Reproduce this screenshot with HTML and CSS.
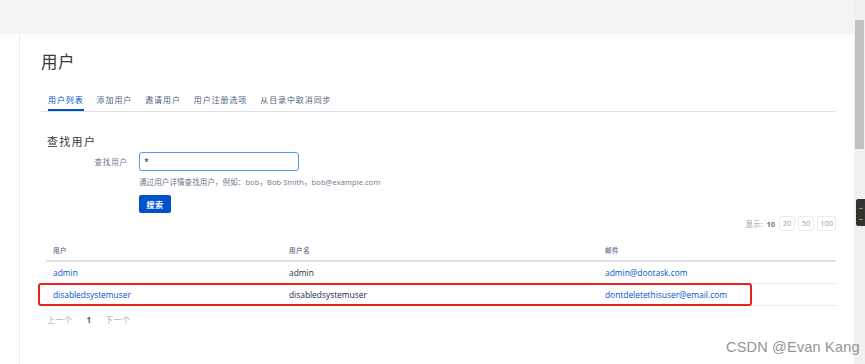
FILE: index.html
```html
<!DOCTYPE html>
<html lang="zh">
<head>
<meta charset="utf-8">
<title>用户</title>
<link rel="stylesheet" href="styles.css">
</head>
<body>
<div class="page">
  <div class="main">
    <div class="topband"></div>
    <div class="body-row">
      <div class="gutter"></div>
      <div class="content">
        <h1 class="title">用户</h1>
        <nav class="tabs">
          <span class="tab active">用户列表</span>
          <span class="tab">添加用户</span>
          <span class="tab">邀请用户</span>
          <span class="tab">用户注册选项</span>
          <span class="tab">从目录中取消同步</span>
        </nav>
        <div class="inner">
          <h2 class="section-title">查找用户</h2>
          <div class="form-row">
            <label class="label">查找用户</label>
            <div class="field">
              <div class="input">*</div>
              <div class="hint">通过用户详情查找用户，例如：bob，Bob Smith，bob@example.com</div>
              <button class="btn">搜索</button>
            </div>
          </div>
          <div class="pagesize">
            <span class="ps-label">显示:</span>
            <span class="ps-current">10</span>
            <span class="ps-box">20</span>
            <span class="ps-box">50</span>
            <span class="ps-box">100</span>
          </div>
          <div class="table">
            <div class="tr th">
              <div class="c1">用户</div>
              <div class="c2">用户名</div>
              <div class="c3">邮件</div>
            </div>
            <div class="tr">
              <div class="c1 link">admin</div>
              <div class="c2">admin</div>
              <div class="c3 link">admin@dootask.com</div>
            </div>
            <div class="tr">
              <div class="c1 link">disabledsystemuser</div>
              <div class="c2">disabledsystemuser</div>
              <div class="c3 link">dontdeletethisuser@email.com</div>
            </div>
            <div class="highlight"></div>
          </div>
          <div class="pager">
            <span class="pg-off">上一个</span>
            <span class="pg-cur">1</span>
            <span class="pg-off">下一个</span>
          </div>
        </div>
      </div>
    </div>
  </div>
  <div class="scrollbar"><div class="thumb"></div></div>
  <div class="widget"><span class="w1"></span><span class="w2"></span></div>
  <div class="watermark">CSDN @Evan Kang</div>
</div>
</body>
</html>
```

FILE: styles.css
```css
html, body {
  margin: 0;
  padding: 0;
  background: #fff;
}
body {
  font-family: "Open Sans", "Noto Sans CJK SC", sans-serif;
  color: #172b4d;
}
.page {
  position: relative;
  display: flex;
  width: 865px;
  height: 364px;
  overflow: hidden;
}
.main {
  flex: 1;
  display: flex;
  flex-direction: column;
}
.topband {
  height: 34px;
  background: #f4f4f4;
}
.body-row {
  flex: 1;
  display: flex;
}
.gutter {
  width: 19px;
}
.content {
  flex: 1;
  border-left: 1px solid #ececec;
  padding: 0 18px 0 21px;
}
.title {
  margin: 17px 0 0;
  font-family: "Noto Sans CJK SC", sans-serif;
  font-weight: 400;
  font-size: 16.5px;
  line-height: 20px;
  letter-spacing: 0.5px;
  color: #3a3a3a;
}
.tabs {
  margin-top: 23px;
  display: flex;
  gap: 13px;
  padding-left: 7px;
  border-bottom: 1px solid #dfe1e6;
}
.tab {
  font-family: "Noto Sans CJK SC", sans-serif;
  font-size: 8px;
  letter-spacing: 0.9px;
  line-height: 12px;
  padding-bottom: 3px;
  border-bottom: 2px solid transparent;
  color: #505f79;
}
.tab.active {
  color: #0052cc;
  border-bottom-color: #0052cc;
}
.inner {
  padding-left: 5px;
}
.section-title {
  margin: 21px 0 0 1px;
  font-family: "Noto Sans CJK SC", sans-serif;
  font-weight: 400;
  font-size: 11px;
  letter-spacing: 1.3px;
  line-height: 16px;
  color: #3a3a3a;
}
.form-row {
  display: flex;
  margin-top: 3px;
}
.label {
  width: 82px;
  text-align: right;
  margin-right: 11px;
  font-family: "Noto Sans CJK SC", sans-serif;
  font-size: 7.5px;
  letter-spacing: 0.9px;
  line-height: 19px;
  color: #6b778c;
}
.field {
  display: flex;
  flex-direction: column;
  align-items: flex-start;
}
.input {
  box-sizing: border-box;
  width: 160px;
  height: 19px;
  border: 1px solid #4c9aff;
  border-radius: 3px;
  padding: 0 4px;
  font-size: 9px;
  line-height: 17px;
  color: #172b4d;
}
.hint {
  margin-top: 6px;
  font-size: 7.5px;
  letter-spacing: 0.1px;
  line-height: 10px;
  color: #6b778c;
  white-space: nowrap;
}
.btn {
  margin-top: 8px;
  width: 32px;
  height: 18px;
  border: 0;
  border-radius: 2px;
  padding: 0;
  background: #0052cc;
  color: #fff;
  font-family: "Noto Sans CJK SC", sans-serif;
  font-weight: 700;
  font-size: 8px;
  letter-spacing: 0.5px;
}
.pagesize {
  margin-top: 3px;
  display: flex;
  justify-content: flex-end;
  align-items: center;
  gap: 3px;
  height: 15px;
  font-size: 7.5px;
  color: #97a0af;
}
.ps-label {
  font-family: "Noto Sans CJK SC", sans-serif;
  margin-right: 1px;
}
.ps-current {
  font-weight: 700;
  color: #6b778c;
  margin-right: 1px;
}
.ps-box {
  box-sizing: border-box;
  height: 15px;
  min-width: 16px;
  padding: 0 2px;
  border: 1px solid #ebecf0;
  border-radius: 2px;
  text-align: center;
  line-height: 13px;
}
.table {
  position: relative;
  margin-top: 8px;
}
.tr {
  display: grid;
  grid-template-columns: 236px 316px 1fr;
  border-bottom: 1px solid #ebecf0;
}
.tr > div {
  padding: 5px 7px;
  font-size: 8.4px;
  line-height: 11px;
  white-space: nowrap;
}
.tr.th {
  border-bottom: 2px solid #dfe1e6;
}
.tr.th > div {
  padding: 6px 7px 4px;
  font-family: "Noto Sans CJK SC", sans-serif;
  font-size: 6.5px;
  font-weight: 700;
  letter-spacing: 0.6px;
  color: #7a869a;
}
.link {
  color: #0052cc;
}
.highlight {
  position: absolute;
  left: -8px;
  top: 44px;
  width: 710px;
  height: 19px;
  border: 2px solid #e8231c;
  border-radius: 3px;
}
.pager {
  margin-top: 8px;
  display: flex;
  align-items: center;
  gap: 14px;
  padding-left: 1px;
  font-size: 8px;
  line-height: 12px;
}
.pg-off {
  font-family: "Noto Sans CJK SC", sans-serif;
  color: #a5adba;
  letter-spacing: 0.5px;
}
.pg-cur {
  font-weight: 700;
  color: #42526e;
}
.scrollbar {
  width: 11px;
  background: #f1f1f1;
  position: relative;
}
.thumb {
  margin: 20px 0 0 1px;
  width: 9px;
  height: 129px;
  background: #c1c1c1;
}
.widget {
  position: absolute;
  left: 856px;
  top: 199px;
  width: 9px;
  height: 27px;
  background: #333;
  border-radius: 2px 0 0 2px;
}
.w1, .w2 {
  position: absolute;
  left: 3px;
  width: 4px;
  height: 1px;
}
.w1 { top: 9px; background: #b8902a; }
.w2 { top: 20px; background: #6aa84f; }
.watermark {
  position: absolute;
  left: 726px;
  top: 339px;
  font-family: "Liberation Sans", sans-serif;
  font-size: 14.5px;
  line-height: 17px;
  color: #959595;
  letter-spacing: 0.2px;
}
```
